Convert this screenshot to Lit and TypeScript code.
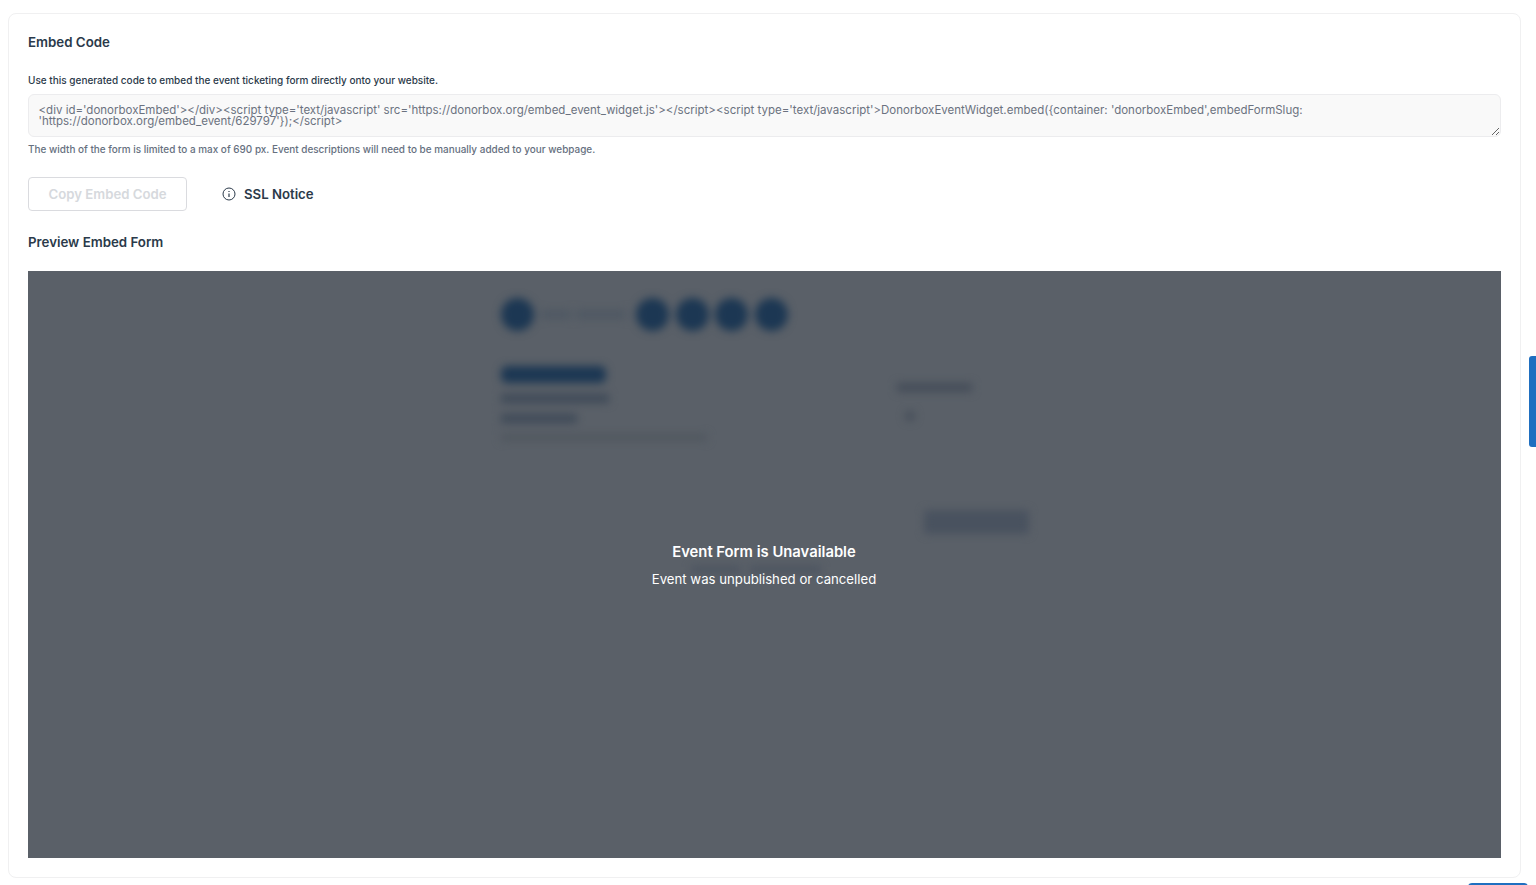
import { LitElement, html, css } from "lit";
import { customElement } from "lit/decorators.js";

@customElement("app-root")
export class AppRoot extends LitElement {
  static styles = css`
    :host { display: block; height: 885px; overflow: hidden; background: #fff; position: relative; font-family: Inter, "Liberation Sans", sans-serif; color: #2b3a4a; box-sizing: border-box; padding: 13px 15px 0 8px; }
    .card { box-sizing: border-box; height: 865px; border: 1px solid #f0f0f1; border-radius: 8px; padding: 18px 19px 19px 19px; display: flex; flex-direction: column; }
    h2 { margin: 0; font-size: 13.3px; line-height: 20px; font-weight: 600; color: #2b3a4a; }
    .hint { margin: 21px 0 0; font-size: 10px; line-height: 14px; font-weight: 500; color: #2b3a4a; }
    .code { box-sizing: border-box; display: block; width: 100%; height: 43px; margin-top: 7px; padding: 10px 10px 10px 9.5px; border: 1px solid #ececee; border-radius: 6px; background: #f9f9f9; color: #6b7280; font: 400 11.5px/11px Inter, "Liberation Sans", sans-serif; resize: vertical; outline: none; overflow: hidden; }
    .note { margin: 5px 0 0; font-size: 9.95px; line-height: 14px; font-weight: 500; color: #667080; }
    .actions { display: flex; align-items: center; margin-top: 21px; }
    .copy { box-sizing: border-box; width: 159px; height: 34px; background: #fff; border: 1.5px solid #dadbdf; border-radius: 4px; color: #d6d9dd; font: 600 13.2px Inter, "Liberation Sans", sans-serif; padding: 0; }
    .ssl { display: flex; align-items: center; gap: 8px; margin-left: 35px; font-size: 13.2px; font-weight: 600; color: #2b3a4a; }
    .ssl svg { display: block; }
    .preview-title { margin-top: 21px; }
    .preview { position: relative; flex: 1; margin-top: 19px; background: #5a6068; overflow: hidden; }
    .ghost { position: absolute; inset: 0; filter: blur(4px); }
    .form { position: absolute; left: 473px; top: 27px; width: 528px; height: 330px; }
    .steps { display: flex; align-items: center; }
    .dot { width: 33px; height: 33px; border-radius: 50%; background: #1c3753; margin-right: 6.5px; }
    .label { display: flex; gap: 5px; width: 85px; margin: 0 10.5px 0 0; }
    .label i { display: block; height: 9px; background: #4f5863; }
    .label i:first-child { width: 30px; }
    .label i:last-child { width: 50px; }
    .cols { display: flex; justify-content: space-between; margin-top: 35px; }
    .left { display: flex; flex-direction: column; align-items: flex-start; }
    .pill { width: 105px; height: 17px; border-radius: 6px; background: #1c3753; }
    .l1 { width: 108px; height: 9px; margin-top: 10.5px; background: #3f4a58; }
    .l2 { width: 76px; height: 9px; margin-top: 11px; background: #3f4a58; }
    .l3 { width: 206px; height: 7px; margin-top: 11.5px; background: #50575f; }
    .right { width: 132px; padding-top: 17px; }
    .r1 { width: 75px; height: 9px; background: #454d59; }
    .r2 { width: 10px; height: 10px; border-radius: 50%; margin: 19px 0 0 8px; background: #454d59; }
    .btn { width: 105px; height: 24px; border-radius: 4px; margin: 69px 0 0 423px; background: #49525f; }
    .foot { display: flex; gap: 8px; margin: 32px 0 0 190px; }
    .foot i { display: block; height: 7px; background: #4c5460; }
    .foot i:first-child { width: 50px; }
    .foot i:last-child { width: 72px; }
    .msg { position: absolute; left: 0; right: 0; top: 270px; width: 1472px; text-align: center; color: #fff; }
    .msg .t { font-size: 14.8px; line-height: 22px; font-weight: 600; }
    .msg .s { margin-top: 6px; font-size: 13.2px; line-height: 20px; font-weight: 400; }
    .tab { position: absolute; right: 0; top: 356px; width: 7px; height: 91px; background: #1f6fc0; border-radius: 3px 0 0 3px; }
    .corner { position: absolute; left: 1468px; top: 883px; width: 60px; height: 8px; background: #1f6fc0; border-radius: 4px 4px 0 0; }
  `;

  render() {
    const code = `<div id='donorboxEmbed'></div><script type='text/javascript' src='https://donorbox.org/embed_event_widget.js'></script><script type='text/javascript'>DonorboxEventWidget.embed({container: 'donorboxEmbed',embedFormSlug: 'https://donorbox.org/embed_event/629797'});</script>`;
    return html`
      <div class="card">
        <h2>Embed Code</h2>
        <p class="hint">Use this generated code to embed the event ticketing form directly onto your website.</p>
        <textarea class="code" readonly .value=${code}></textarea>
        <p class="note">The width of the form is limited to a max of 690 px. Event descriptions will need to be manually added to your webpage.</p>
        <div class="actions">
          <button class="copy" disabled>Copy Embed Code</button>
          <div class="ssl">
            <svg width="14" height="14" viewBox="0 0 14 14" fill="none" stroke="#2b3a4a" stroke-width="1">
              <circle cx="7" cy="7" r="6"></circle>
              <path d="M7 6.4V10M7 4v1" stroke-width="1.2"></path>
            </svg>
            <span>SSL Notice</span>
          </div>
        </div>
        <h2 class="preview-title">Preview Embed Form</h2>
        <div class="preview">
          <div class="ghost">
            <div class="form">
              <div class="steps">
                <div class="dot"></div><div class="label"><i></i><i></i></div>
                <div class="dot"></div><div class="dot"></div><div class="dot"></div><div class="dot"></div>
              </div>
              <div class="cols">
                <div class="left"><div class="pill"></div><div class="l1"></div><div class="l2"></div><div class="l3"></div></div>
                <div class="right"><div class="r1"></div><div class="r2"></div></div>
              </div>
              <div class="btn"></div>
              <div class="foot"><i></i><i></i></div>
            </div>
          </div>
          <div class="msg">
            <div class="t">Event Form is Unavailable</div>
            <div class="s">Event was unpublished or cancelled</div>
          </div>
        </div>
      </div>
      <div class="tab"></div>
      <div class="corner"></div>
    `;
  }
}
